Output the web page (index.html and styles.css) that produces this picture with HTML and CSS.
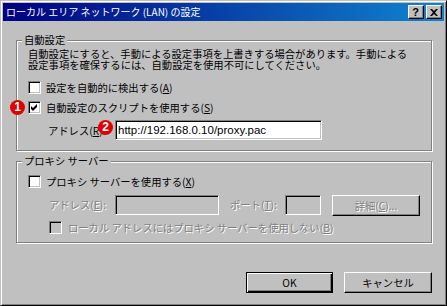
FILE: index.html
```html
<!DOCTYPE html>
<html lang="ja">
<head>
<meta charset="utf-8">
<title>ローカル エリア ネットワーク (LAN) の設定</title>
<link rel="stylesheet" href="styles.css">
</head>
<body>
<div class="window">
  <div class="titlebar">
    <span class="title">ローカル エリア ネットワーク (LAN) の設定</span>
    <div class="tbtns">
      <span class="tbtn help">?</span>
      <span class="tbtn close"><svg width="8" height="7" viewBox="0 0 8 7"><path d="M0 0h2l2 2 2-2h2L5 3.5 8 7H6L4 5 2 7H0l3-3.5z" fill="#000"/></svg></span>
    </div>
  </div>
  <div class="body">
    <div class="group g1">
      <span class="caption">自動設定</span>
      <p class="desc">自動設定にすると、手動による設定事項を上書きする場合があります。手動による<br>設定事項を確保するには、自動設定を使用不可にしてください。</p>
      <div class="row r1"><span class="cb"></span><span class="lbltext">設定を自動的に検出する(<u>A</u>)</span></div>
      <div class="row r2"><span class="badge b1">1</span><span class="cb"><svg width="7" height="7" viewBox="0 0 7 7"><path d="M0 2L2 4L6 0V3L2 7L0 5Z" fill="#000"/></svg></span><span class="lbltext">自動設定のスクリプトを使用する(<u>S</u>)</span></div>
      <div class="row addr"><span class="flabel">アドレス(<u>R</u>):</span><span class="badge b2">2</span><span class="field url">http://192.168.0.10/proxy.pac</span></div>
    </div>
    <div class="group g2">
      <span class="caption">プロキシ サーバー</span>
      <div class="row r3"><span class="cb"></span><span class="lbltext">プロキシ サーバーを使用する(<u>X</u>)</span></div>
      <div class="row proxy">
        <span class="flabel dis">アドレス(<u>E</u>):</span>
        <span class="field off faddr"></span>
        <span class="plabel dis">ポート(<u>T</u>):</span>
        <span class="field off fport"></span>
        <span class="btn dis detail">詳細(<u>C</u>)...</span>
      </div>
      <div class="row r4"><span class="cb off"></span><span class="lbltext dis">ローカル アドレスにはプロキシ サーバーを使用しない(<u>B</u>)</span></div>
    </div>
    <div class="actions">
      <span class="btn default">OK</span>
      <span class="btn">キャンセル</span>
    </div>
  </div>
</div>
</body>
</html>
```
FILE: styles.css
```css
html, body {
  margin: 0;
  padding: 0;
}
body {
  width: 447px;
  height: 306px;
  overflow: hidden;
  font-family: "Noto Sans CJK JP", "Liberation Sans", sans-serif;
  font-size: 10.3px;
  color: #000;
}
.window {
  box-sizing: border-box;
  width: 447px;
  height: 306px;
  background: #c0c0c0;
  border: 1px solid;
  border-color: #c0c0c0 #000 #000 #c0c0c0;
  box-shadow: inset 1px 1px #fff, inset -1px -1px #808080;
  padding: 2px;
  display: flex;
  flex-direction: column;
}
.titlebar {
  height: 18px;
  flex: none;
  display: flex;
  align-items: center;
  justify-content: space-between;
  background: linear-gradient(90deg, #000080, #1084d0);
  padding: 0 2px 0 3px;
  color: #fff;
}
.title {
  font-size: 10px;
  line-height: 18px;
  white-space: nowrap;
}
.tbtns {
  display: flex;
  gap: 2px;
}
.tbtn {
  box-sizing: border-box;
  width: 16px;
  height: 14px;
  background: #c0c0c0;
  border: 1px solid;
  border-color: #fff #000 #000 #fff;
  box-shadow: inset -1px -1px #808080;
  display: flex;
  align-items: center;
  justify-content: center;
  color: #000;
}
.help {
  font-family: "Liberation Sans", sans-serif;
  font-weight: bold;
  font-size: 11px;
  line-height: 12px;
  padding-right: 1px;
}
.close svg {
  display: block;
  margin-right: 1px;
}
.body {
  flex: 1;
  display: flex;
  flex-direction: column;
  padding: 19px 12px 0 13px;
}
.group {
  position: relative;
  border: 1px solid #808080;
  box-shadow: inset 1px 1px #fff, 1px 1px #fff;
  padding: 0 0 0 11px;
}
.caption {
  position: absolute;
  top: -7px;
  left: 5px;
  padding: 0 2px;
  background: #c0c0c0;
  line-height: 12px;
  white-space: nowrap;
}
.g1 {
  padding-top: 7px;
  padding-bottom: 10px;
}
.desc {
  margin: 0;
  line-height: 11px;
  white-space: nowrap;
}
.row {
  position: relative;
  display: flex;
  align-items: center;
  height: 13px;
  white-space: nowrap;
}
.r1 { margin-top: 11px; }
.r2 { margin-top: 7px; }
.addr { margin-top: 6px; height: 20px; }
.cb {
  box-sizing: border-box;
  width: 13px;
  height: 13px;
  flex: none;
  background: #fff;
  border: 1px solid;
  border-color: #808080 #fff #fff #808080;
  box-shadow: inset 1px 1px #000, inset -1px -1px #c0c0c0;
  display: flex;
  align-items: center;
  justify-content: center;
}
.cb svg { display: block; }
.cb.off { background: #c0c0c0; }
.lbltext {
  margin-left: 5px;
  line-height: 13px;
}
.r4 .lbltext { margin-left: 6px; }
.flabel {
  width: 67px;
  margin-left: 20px;
  flex: none;
}
.badge {
  position: absolute;
  width: 15px;
  height: 15px;
  border-radius: 50%;
  background: #e00000;
  color: #fff;
  font-family: "Liberation Sans", sans-serif;
  font-weight: bold;
  font-size: 12px;
  line-height: 15px;
  text-align: center;
}
.b1 { left: -18px; top: -1px; }
.b2 { left: 70px; top: 0; }
.field {
  box-sizing: border-box;
  height: 20px;
  background: #fff;
  border: 1px solid;
  border-color: #808080 #fff #fff #808080;
  box-shadow: inset 1px 1px #000, inset -1px -1px #c0c0c0;
  flex: none;
}
.url {
  width: 207px;
  padding-left: 2px;
  font-family: "Liberation Sans", sans-serif;
  font-size: 11.5px;
  line-height: 18px;
}
.field.off { background: #c0c0c0; }
.g2 {
  margin-top: 10px;
  padding-top: 13px;
  padding-bottom: 8px;
}
.proxy {
  margin-top: 7px;
  height: 21px;
  align-items: flex-start;
}
.proxy .flabel {
  width: 66px;
  margin-left: 21px;
  line-height: 20px;
}
.faddr { width: 104px; }
.plabel {
  width: 55px;
  margin-left: 11px;
  line-height: 20px;
  flex: none;
}
.fport { width: 36px; }
.dis {
  color: #808080;
  text-shadow: 1px 1px 0 #fff;
}
.r4 {
  margin-top: 5px;
  padding-left: 21px;
}
.btn {
  box-sizing: border-box;
  height: 21px;
  width: 88px;
  border: 1px solid;
  border-color: #fff #000 #000 #fff;
  box-shadow: inset -1px -1px #808080;
  display: flex;
  align-items: center;
  justify-content: center;
  line-height: 13px;
  flex: none;
}
.detail { margin-left: 11px; }
.actions {
  display: flex;
  justify-content: flex-end;
  gap: 11px;
  margin-top: 29px;
}
.btn.default {
  width: 87px;
  border-color: #000;
  box-shadow: inset 1px 1px #fff, inset -1px -1px #000, inset -2px -2px #808080;
}
```
